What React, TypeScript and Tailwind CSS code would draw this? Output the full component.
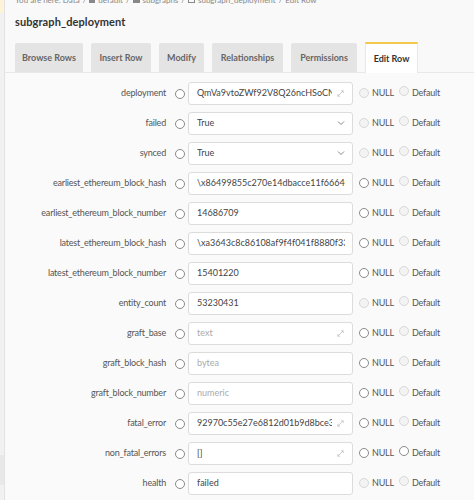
import React from "react";

type Row = {
  label: string;
  value: string;
  placeholder?: boolean;
  kind?: "text" | "expand" | "select";
  nullOn: boolean;
  defOn: boolean;
};

const rows: Row[] = [
  { label: "deployment", value: "QmVa9vtoZWf92V8Q26ncHSoCNYLUb", kind: "expand", nullOn: false, defOn: false },
  { label: "failed", value: "True", kind: "select", nullOn: false, defOn: false },
  { label: "synced", value: "True", kind: "select", nullOn: false, defOn: false },
  { label: "earliest_ethereum_block_hash", value: "\\x86499855c270e14dbacce11f66640f8f8b1", nullOn: true, defOn: false },
  { label: "earliest_ethereum_block_number", value: "14686709", nullOn: true, defOn: false },
  { label: "latest_ethereum_block_hash", value: "\\xa3643c8c86108af9f4f041f8880f333dd2e", nullOn: true, defOn: false },
  { label: "latest_ethereum_block_number", value: "15401220", nullOn: true, defOn: false },
  { label: "entity_count", value: "53230431", nullOn: false, defOn: false },
  { label: "graft_base", value: "text", placeholder: true, kind: "expand", nullOn: true, defOn: false },
  { label: "graft_block_hash", value: "bytea", placeholder: true, nullOn: true, defOn: false },
  { label: "graft_block_number", value: "numeric", placeholder: true, nullOn: true, defOn: false },
  { label: "fatal_error", value: "92970c55e27e6812d01b9d8bce365a4f1", kind: "expand", nullOn: true, defOn: false },
  { label: "non_fatal_errors", value: "[]", kind: "expand", nullOn: true, defOn: true },
  { label: "health", value: "failed", nullOn: false, defOn: false },
];

function Radio({ on }: { on: boolean }) {
  return (
    <span
      className={
        on
          ? "inline-block w-[10px] h-[10px] rounded-full border border-[#8a8a8a] bg-white shrink-0"
          : "inline-block w-[10px] h-[10px] rounded-full border border-[#d9d9d9] bg-[#f3f3f3] shrink-0"
      }
    />
  );
}

function ExpandIcon() {
  return (
    <svg width="9" height="9" viewBox="0 0 10 10" className="shrink-0">
      <path d="M2 8 L8 2" stroke="#c8c8c8" strokeWidth="1" fill="none" />
      <path d="M5.5 2 H8 V4.5" stroke="#c8c8c8" strokeWidth="1" fill="none" />
      <path d="M2 5.5 V8 H4.5" stroke="#c8c8c8" strokeWidth="1" fill="none" />
    </svg>
  );
}

function Chevron() {
  return (
    <svg width="8" height="6" viewBox="0 0 8 6" className="shrink-0">
      <path d="M1 1.5 L4 4.5 L7 1.5" stroke="#888" strokeWidth="1" fill="none" />
    </svg>
  );
}

function Tab({ label, w, active }: { label: string; w: string; active?: boolean }) {
  return active ? (
    <div className={w + " h-[31px] -mb-px flex items-center justify-center bg-white border-t-2 border-t-[#f2c94c] border-x border-x-[#e8e8e8] text-[9px] font-bold text-[#333]"}>
      {label}
    </div>
  ) : (
    <div className={w + " h-[29px] mt-[1px] flex items-center justify-center bg-[#e4e4e4] rounded-t-[2px] text-[9px] font-bold text-[#666]"}>
      {label}
    </div>
  );
}

export default function App() {
  return (
    <div
      className="w-[474px] h-[500px] overflow-hidden bg-[#f9f9f9] flex"
      style={{ fontFamily: "Lato, 'Open Sans', sans-serif" }}
    >
      <div className="w-[5px] shrink-0 flex flex-col bg-[#f1f1f1] border-r border-[#e2e2e2]">
        <div className="h-[13px] bg-[#fdf3d6]" />
        <div className="h-[442px]" />
        <div className="h-[30px] bg-[#e8e8e8]" />
      </div>
      <div className="flex-1 flex flex-col">
        <div className="pl-[10px] -mt-[6px] h-[12px] flex items-center gap-[3px] text-[8px] text-[#888] whitespace-nowrap">
          <span>You are here: Data</span>
          <span>/</span>
          <span className="inline-block w-[6px] h-[6px] bg-[#888]" />
          <span>default</span>
          <span>/</span>
          <span className="inline-block w-[7px] h-[5px] bg-[#888]" />
          <span>subgraphs</span>
          <span>/</span>
          <span className="inline-block w-[7px] h-[6px] border border-[#888]" />
          <span>subgraph_deployment</span>
          <span>/</span>
          <span>Edit Row</span>
        </div>
        <div className="pl-[10px] mt-[8px] h-[16px] flex items-center text-[11px] font-bold text-[#333] tracking-[0.1px]">
          subgraph_deployment
        </div>
        <div className="pl-[10px] mt-[12px] flex items-end gap-[8px] border-b border-[#e8e8e8]">
          <Tab label="Browse Rows" w="w-[68px]" />
          <Tab label="Insert Row" w="w-[60px]" />
          <Tab label="Modify" w="w-[45px]" />
          <Tab label="Relationships" w="w-[71px]" />
          <Tab label="Permissions" w="w-[66px]" />
          <Tab label="Edit Row" w="w-[53px]" active />
        </div>
        <div className="flex flex-col pt-[5px] bg-[#fafafa]">
          {rows.map((r) => (
            <div key={r.label} className="h-[30px] flex items-center">
              <div className="w-[161px] text-right text-[9px] tracking-[-0.2px] text-[#555] whitespace-nowrap">
                {r.label}
              </div>
              <div className="ml-[9px]">
                <Radio on={true} />
              </div>
              <div className="ml-[3px] w-[165px] h-[23px] bg-white border border-[#dcdcdc] rounded-[3px] flex items-center pl-[8px] pr-[7px] gap-[4px]">
                <span
                  className={
                    "flex-1 min-w-0 overflow-hidden whitespace-nowrap text-[9px] " +
                    (r.placeholder ? "text-[#aaa]" : "text-[#444]")
                  }
                >
                  {r.value}
                </span>
                {r.kind === "expand" && <ExpandIcon />}
                {r.kind === "select" && <Chevron />}
              </div>
              <div className="ml-[6px] flex items-center gap-[3px] text-[9px] tracking-[-0.2px] text-[#555]">
                <Radio on={r.nullOn} />
                <span>NULL</span>
                <span className="ml-[2px]">
                  <Radio on={r.defOn} />
                </span>
                <span>Default</span>
              </div>
            </div>
          ))}
        </div>
      </div>
    </div>
  );
}
